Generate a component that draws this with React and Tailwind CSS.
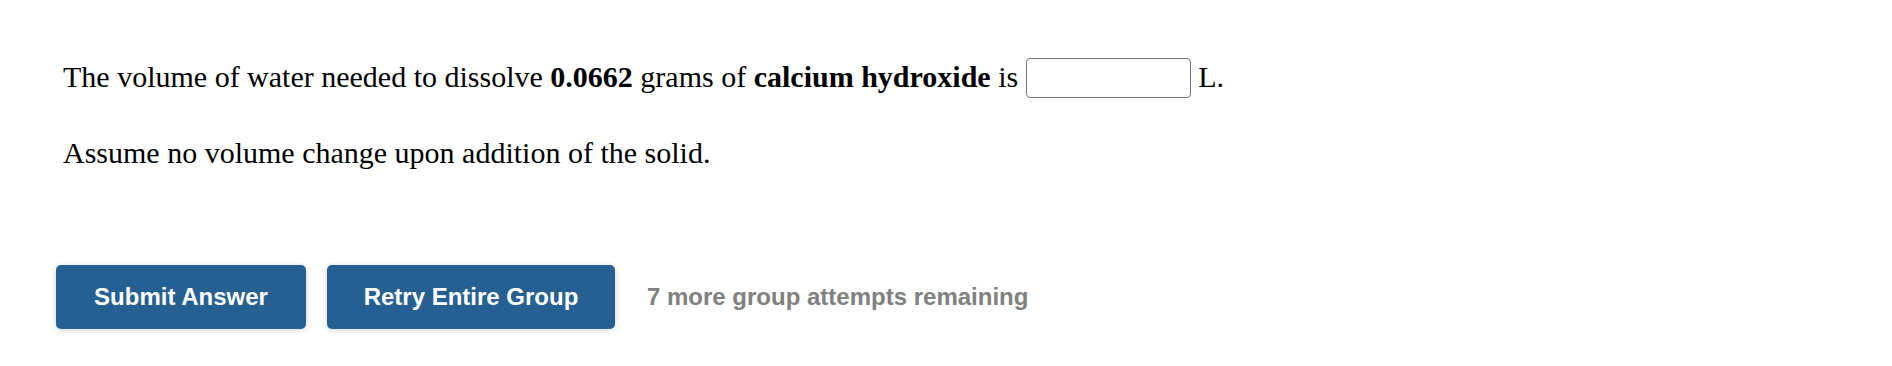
export default function App() {
  return (
    <div className="w-[1892px] h-[366px] bg-white overflow-hidden">
      <div className="pl-[63px] pt-[58px] text-[30px] text-black font-['Liberation_Serif',serif] leading-[1.15]">
        <p>
          The volume of water needed to dissolve <b>0.0662</b> grams of <b>calcium hydroxide</b> is{' '}
          <input
            type="text"
            className="w-[165px] h-[40px] align-middle mb-[5px] border border-[#767676] rounded-[4px] bg-white outline-none"
          />{' '}
          L.
        </p>
        <p className="mt-[33px]">Assume no volume change upon addition of the solid.</p>
      </div>
      <div className="flex items-center pl-[56px] mt-[94px] font-['Liberation_Sans',Arial,sans-serif] font-bold text-[24px]">
        <button className="h-[64px] w-[250px] rounded-[5px] bg-[#266093] text-white shadow-[0_1px_6px_rgba(0,0,0,0.18)]">
          Submit Answer
        </button>
        <button className="ml-[21px] h-[64px] w-[288px] rounded-[5px] bg-[#266093] text-white shadow-[0_1px_6px_rgba(0,0,0,0.18)]">
          Retry Entire Group
        </button>
        <span className="ml-[32px] text-[#808080]">7 more group attempts remaining</span>
      </div>
    </div>
  )
}
